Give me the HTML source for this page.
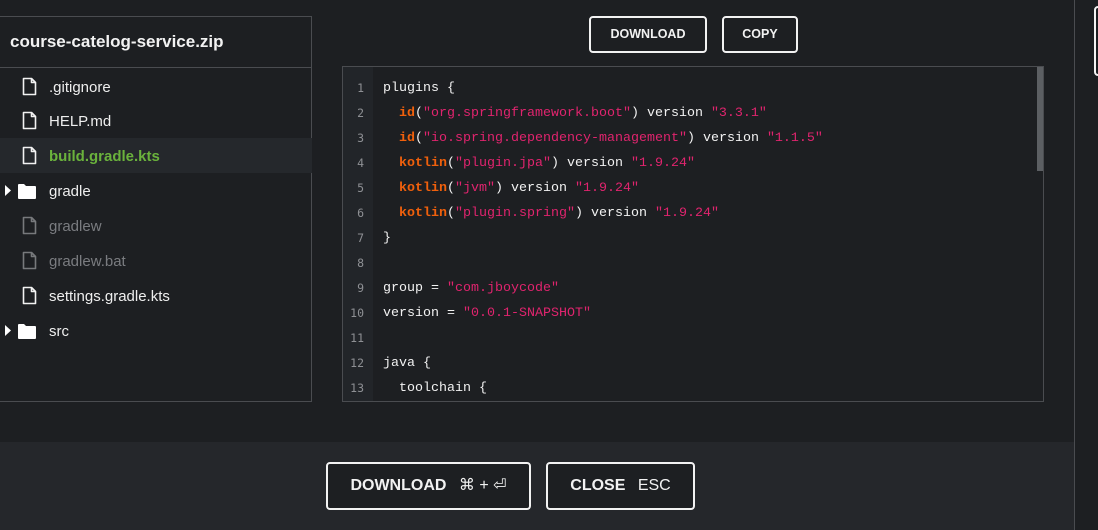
<!DOCTYPE html>
<html><head><style>
*{margin:0;padding:0;box-sizing:border-box}
body{width:1098px;height:530px;background:#1d1f22;position:relative;overflow:hidden;font-family:"Liberation Sans",Arial,sans-serif;color:#eee}
.panel{position:absolute;left:-2px;top:16px;width:314px;height:386px;border:1px solid #4a4c50}
.hdr{height:51px;border-bottom:1px solid #4a4c50;font-weight:bold;font-size:17px;padding:15px 0 0 11px;color:#f2f2f2}
.row{position:absolute;left:0;width:312px;height:35px;font-size:15px;line-height:37px}
.row span{position:absolute;left:49px}
.row svg{position:absolute}
.sel{background:#25282c}
.code{position:absolute;left:342px;top:66px;width:702px;height:336px;border:1px solid #4a4c50;background:#1d1f22;overflow:hidden}
.gut{position:absolute;left:0;top:0;width:30px;height:100%;background:#222529}
.ln{position:absolute;left:0;width:21px;text-align:right;font-family:"DejaVu Sans Mono",monospace;font-size:11.5px;color:#8e9094}
.cl{position:absolute;left:40px;font-family:"Liberation Mono",monospace;font-size:13.33px;color:#f2f2f2;white-space:pre}
.k{color:#f0600c;font-weight:bold}.s{color:#e0246e}
.sb{position:absolute;right:0;top:0;width:6px;height:104px;background:#5c5f63}
.btn{position:absolute;border:2px solid #f2f2f2;border-radius:4px;color:#f2f2f2;font-weight:bold;text-align:center;background:#1d1f22}
.bot{position:absolute;left:0;top:442px;width:1074px;height:88px;background:#25272b}
</style></head><body>
<div class="panel">
<div class="hdr">course-catelog-service.zip</div>
</div>
<div class="row" style="top:69px"><svg style="left:22px;top:8px" width="15" height="19" viewBox="0 0 15 19"><path d="M1.5 1.5h8l4 4v12h-12z M9.5 1.5v4h4" fill="none" stroke="#f2f2f2" stroke-width="1.6" stroke-linejoin="round"/></svg><span>.gitignore</span></div>
<div class="row" style="top:103px"><svg style="left:22px;top:8px" width="15" height="19" viewBox="0 0 15 19"><path d="M1.5 1.5h8l4 4v12h-12z M9.5 1.5v4h4" fill="none" stroke="#f2f2f2" stroke-width="1.6" stroke-linejoin="round"/></svg><span>HELP.md</span></div>
<div class="row sel" style="top:138px"><svg style="left:22px;top:8px" width="15" height="19" viewBox="0 0 15 19"><path d="M1.5 1.5h8l4 4v12h-12z M9.5 1.5v4h4" fill="none" stroke="#f2f2f2" stroke-width="1.6" stroke-linejoin="round"/></svg><span style="color:#6ab23c;font-weight:bold">build.gradle.kts</span></div>
<div class="row" style="top:173px"><svg style="left:5px;top:12px" width="6" height="11"><path d="M0 0L6 5.5L0 11z" fill="#fff"/></svg><svg style="left:17px;top:10px" width="20" height="17"><path d="M1 2q0-1 1-1h5l2 2h9q1 0 1 1v11q0 1-1 1H2q-1 0-1-1z" fill="#fff"/></svg><span>gradle</span></div>
<div class="row" style="top:208px"><svg style="left:22px;top:8px" width="15" height="19" viewBox="0 0 15 19"><path d="M1.5 1.5h8l4 4v12h-12z M9.5 1.5v4h4" fill="none" stroke="#77797c" stroke-width="1.6" stroke-linejoin="round"/></svg><span style="color:#7a7c80">gradlew</span></div>
<div class="row" style="top:243px"><svg style="left:22px;top:8px" width="15" height="19" viewBox="0 0 15 19"><path d="M1.5 1.5h8l4 4v12h-12z M9.5 1.5v4h4" fill="none" stroke="#77797c" stroke-width="1.6" stroke-linejoin="round"/></svg><span style="color:#7a7c80">gradlew.bat</span></div>
<div class="row" style="top:278px"><svg style="left:22px;top:8px" width="15" height="19" viewBox="0 0 15 19"><path d="M1.5 1.5h8l4 4v12h-12z M9.5 1.5v4h4" fill="none" stroke="#f2f2f2" stroke-width="1.6" stroke-linejoin="round"/></svg><span>settings.gradle.kts</span></div>
<div class="row" style="top:313px"><svg style="left:5px;top:12px" width="6" height="11"><path d="M0 0L6 5.5L0 11z" fill="#fff"/></svg><svg style="left:17px;top:10px" width="20" height="17"><path d="M1 2q0-1 1-1h5l2 2h9q1 0 1 1v11q0 1-1 1H2q-1 0-1-1z" fill="#fff"/></svg><span>src</span></div>

<div class="btn" style="left:589px;top:16px;width:118px;height:37px;font-size:12.5px;line-height:33px">DOWNLOAD</div>
<div class="btn" style="left:722px;top:16px;width:76px;height:37px;font-size:12.5px;line-height:33px">COPY</div>

<div class="code">
<div class="gut"></div>
<div class="sb"></div>
<div class="ln" style="top:14px">1</div><div class="cl" style="top:14px">plugins {</div>
<div class="ln" style="top:39px">2</div><div class="cl" style="top:39px">  <span class="k">id</span>(<span class="s">"org.springframework.boot"</span>) version <span class="s">"3.3.1"</span></div>
<div class="ln" style="top:64px">3</div><div class="cl" style="top:64px">  <span class="k">id</span>(<span class="s">"io.spring.dependency-management"</span>) version <span class="s">"1.1.5"</span></div>
<div class="ln" style="top:89px">4</div><div class="cl" style="top:89px">  <span class="k">kotlin</span>(<span class="s">"plugin.jpa"</span>) version <span class="s">"1.9.24"</span></div>
<div class="ln" style="top:114px">5</div><div class="cl" style="top:114px">  <span class="k">kotlin</span>(<span class="s">"jvm"</span>) version <span class="s">"1.9.24"</span></div>
<div class="ln" style="top:139px">6</div><div class="cl" style="top:139px">  <span class="k">kotlin</span>(<span class="s">"plugin.spring"</span>) version <span class="s">"1.9.24"</span></div>
<div class="ln" style="top:164px">7</div><div class="cl" style="top:164px">}</div>
<div class="ln" style="top:189px">8</div>
<div class="ln" style="top:214px">9</div><div class="cl" style="top:214px">group = <span class="s">"com.jboycode"</span></div>
<div class="ln" style="top:239px">10</div><div class="cl" style="top:239px">version = <span class="s">"0.0.1-SNAPSHOT"</span></div>
<div class="ln" style="top:264px">11</div>
<div class="ln" style="top:289px">12</div><div class="cl" style="top:289px">java {</div>
<div class="ln" style="top:314px">13</div><div class="cl" style="top:314px">  toolchain {</div>
</div>

<div class="bot"></div>
<div class="btn" style="left:326px;top:462px;width:205px;height:48px;font-size:16px;line-height:44px">DOWNLOAD <span style="font-weight:normal;margin-left:8px">⌘ + ⏎</span></div>
<div class="btn" style="left:546px;top:462px;width:149px;height:48px;font-size:16px;line-height:44px">CLOSE <span style="font-weight:normal;margin-left:8px">ESC</span></div>

<div style="position:absolute;left:1074px;top:0;width:1px;height:530px;background:#4a4c50"></div>
<div style="position:absolute;left:1094px;top:6px;width:10px;height:70px;border:2px solid #f2f2f2;border-radius:4px;background:#1d1f22"></div>
</body></html>
